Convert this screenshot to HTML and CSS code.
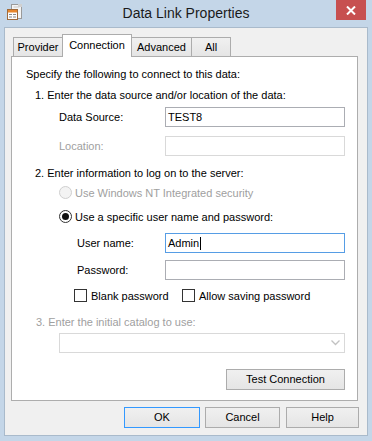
FILE: index.html
```html
<html><head>
<title>Data Link Properties</title>
<link rel="stylesheet" href="styles.css">
</head>
<body>
<div class="window">
  <div class="titlebar">
    <svg class="app-icon" width="16" height="16" viewBox="0 0 16 16">
      <rect x="4.5" y="0.5" width="10" height="14" fill="#f4f4f4" stroke="#9a9a9a"/>
      <rect x="6.5" y="2.5" width="6" height="1" fill="#c8c8c8"/>
      <rect x="11" y="0" width="4" height="3" fill="#d0d0d0"/>
      <rect x="0.5" y="5.5" width="10" height="10" fill="#fdfdfd" stroke="#a06a3a"/>
      <rect x="1" y="6" width="9" height="2.5" fill="#e8862b"/>
      <rect x="2" y="10" width="3" height="1" fill="#888"/>
      <rect x="6" y="10" width="3" height="1" fill="#888"/>
      <rect x="2" y="12.5" width="3" height="1" fill="#888"/>
      <rect x="6" y="12.5" width="3" height="1" fill="#888"/>
    </svg>
    <div class="title">Data Link Properties</div>
    <div class="close">
      <svg width="10" height="9" viewBox="0 0 10 9">
        <path d="M1 0.5 L9 8.5 M9 0.5 L1 8.5" stroke="#fff" stroke-width="2"/>
      </svg>
    </div>
  </div>

  <div class="client">
    <div class="tabs">
      <div class="tab t-provider">Provider</div>
      <div class="tab t-connection active">Connection</div>
      <div class="tab t-advanced">Advanced</div>
      <div class="tab t-all">All</div>
    </div>

    <div class="panel">
      <div class="line spec">Specify the following to connect to this data:</div>
      <div class="line step step1">1. Enter the data source and/or location of the data:</div>

      <div class="field ds">
        <span class="label">Data Source:</span>
        <div class="input">TEST8</div>
      </div>
      <div class="field loc disabled">
        <span class="label">Location:</span>
        <div class="input off"></div>
      </div>

      <div class="line step step2">2. Enter information to log on to the server:</div>

      <div class="option opt1 disabled">
        <span class="radio off"></span>
        <span>Use Windows NT Integrated security</span>
      </div>
      <div class="option opt2">
        <span class="radio checked"></span>
        <span>Use a specific user name and password:</span>
      </div>

      <div class="field user">
        <span class="label">User name:</span>
        <div class="input focus">Admin<span class="caret"></span></div>
      </div>
      <div class="field pass">
        <span class="label">Password:</span>
        <div class="input"></div>
      </div>

      <div class="checks">
        <div class="check first"><span class="box"></span><span>Blank password</span></div>
        <div class="check"><span class="box"></span><span>Allow saving password</span></div>
      </div>

      <div class="line step step3 disabled">3. Enter the initial catalog to use:</div>
      <div class="combo">
        <svg width="9" height="6" viewBox="0 0 9 6">
          <path d="M0.5 0.5 L4.5 4.5 L8.5 0.5" fill="none" stroke="#c2c2c2" stroke-width="1.3"/>
        </svg>
      </div>

      <div class="btn test">Test Connection</div>
    </div>

    <div class="buttons">
      <div class="btn ok default">OK</div>
      <div class="btn cancel">Cancel</div>
      <div class="btn help">Help</div>
    </div>
  </div>
</div>
</body>
</html>
```

FILE: styles.css
```css
* { box-sizing: border-box; }
body { margin: 0; background: #c4d6e8; font-family: "Liberation Sans", Arial, sans-serif; font-size: 11px; color: #000; }

.window { width: 372px; height: 441px; display: flex; flex-direction: column; }

.titlebar { height: 27px; display: grid; grid-template-columns: 1fr auto 1fr; align-items: start; }
.app-icon { margin: 4px 0 0 7px; }
.title { font-size: 14px; line-height: 27px; color: #1a1a1a; }
.close { justify-self: end; width: 30px; height: 20px; margin-right: 6px; background: #c75050; display: flex; align-items: center; justify-content: center; }

.client { margin: 0 4px; height: 409px; border: 1px solid #a9bacb; background: #f0f0f0; }

.tabs { margin: 6px 0 0 6px; padding-left: 2px; height: 22px; display: flex; align-items: flex-end; }
.tab { height: 19px; line-height: 18px; text-align: center; border-top: 1px solid #acacac; border-left: 1px solid #acacac; background: linear-gradient(#f0f0f0, #e5e5e5); }
.tab.active { height: 23px; line-height: 20px; margin-bottom: -1px; background: #fff; border-right: 1px solid #acacac; position: relative; z-index: 1; }
.tab.active + .tab { border-left: none; }
.tab:last-child { border-right: 1px solid #acacac; }
.t-provider { width: 49px; }
.t-connection { width: 70px; }
.t-advanced { width: 59px; }
.t-all { width: 40px; }

.panel { margin-left: 6px; width: 347px; height: 345px; border: 1px solid #adadad; background: #fff; padding-left: 14px; display: flex; flex-direction: column; }

.line { line-height: 13px; height: 13px; }
.spec { margin-top: 11px; }
.step { margin-left: 9px; }
.step1 { margin-top: 8px; }
.step2 { margin-top: 11px; }
.step3 { margin-top: 14px; margin-left: 10px; }
.disabled { color: #a0a0a0; }

.field { display: flex; align-items: center; height: 20px; }
.field .label { flex: none; }
.ds, .loc { margin-left: 33px; }
.ds .label, .loc .label { width: 106px; }
.ds { margin-top: 5px; }
.loc { margin-top: 9px; }
.user, .pass { margin-left: 51px; }
.user .label, .pass .label { width: 88px; }
.user { margin-top: 10px; }
.pass { margin-top: 7px; }

.input { width: 180px; height: 20px; border: 1px solid #abadb3; background: #fff; padding-left: 2px; line-height: 18px; color: #000; display: flex; align-items: center; }
.input.off { border-color: #d9d9d9; }
.input.focus { border-color: #569de5; }
.caret { width: 1px; height: 13px; background: #000; margin-left: 1px; }

.option { display: flex; align-items: center; height: 13px; margin-left: 33px; }
.opt1 { margin-top: 6px; }
.opt2 { margin-top: 11px; }
.radio { width: 13px; height: 13px; border-radius: 50%; border: 1px solid #333; background: #fff; margin-right: 3px; display: flex; align-items: center; justify-content: center; }
.radio.off { border-color: #cfcfcf; background: #f3f3f3; }
.radio.checked::after { content: ""; width: 7px; height: 7px; border-radius: 50%; background: #111; }

.checks { display: flex; height: 13px; margin: 9px 0 0 48px; }
.check { display: flex; align-items: center; }
.check.first { width: 108px; }
.box { width: 13px; height: 13px; border: 1px solid #333; background: #fff; margin-right: 4px; }

.combo { width: 286px; height: 20px; margin: 4px 0 0 33px; border: 1px solid #d9d9d9; background: #fff; display: flex; align-items: center; justify-content: flex-end; padding-right: 4px; }

.btn { height: 21px; border: 1px solid #acacac; background: linear-gradient(#f0f0f0, #e5e5e5); text-align: center; line-height: 19px; }
.btn.default { border-color: #3399ff; }
.test { width: 119px; margin: 16px 0 0 200px; }

.buttons { margin-top: 6px; display: flex; justify-content: flex-end; padding-right: 8px; }
.ok { width: 76px; }
.cancel { width: 75px; margin-left: 5px; }
.help { width: 73px; margin-left: 6px; }
```
